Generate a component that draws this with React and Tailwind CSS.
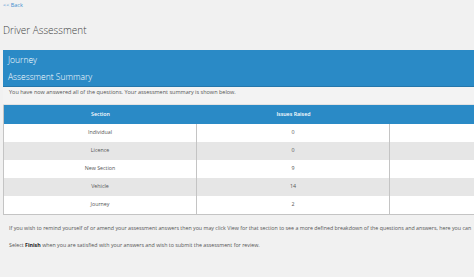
import React from "react";

const rows = [
  { section: "Individual", issues: 0 },
  { section: "Licence", issues: 0 },
  { section: "New Section", issues: 9 },
  { section: "Vehicle", issues: 14 },
  { section: "Journey", issues: 2 },
];

export default function App() {
  return (
    <div
      className="w-[474px] h-[277px] overflow-hidden bg-[#f1f1f1] text-[#555]"
      style={{ fontFamily: '"Open Sans", "Noto Sans", sans-serif' }}
    >
      <div className="pl-[3px] pt-[1px] h-[11px] text-[5.5px] leading-[9px] text-[#3c8fd0]">&lt;&lt; Back</div>

      <h1 className="pl-[3px] mt-[12px] h-[27px] text-[10px] leading-[14px] font-light text-[#444]">
        Driver Assessment
      </h1>

      <div className="ml-[3px] bg-[#2a8ac6] border-b border-[#2577ab] text-white font-light">
        <div className="pl-[5px] pt-[3px] h-[18px] text-[8.5px] leading-[14px]">Journey</div>
        <div className="pl-[5px] h-[18px] text-[8.5px] leading-[17px]">Assessment Summary</div>
      </div>

      <div className="ml-[3px] pl-[6px] h-[18px] text-[5.5px] leading-[10px] bg-[#f3f3f3] border-b border-[#e2e2e2] text-[#555]">
        You have now answered all of the questions. Your assessment summary is shown below.
      </div>

      <div className="ml-[3px] w-[520px] border-l border-b border-[#c4c4c4]">
        <div className="flex h-[19px] bg-[#2a8ac6] text-white text-[5.3px] font-semibold items-center">
          <div className="w-[193px] text-center">Section</div>
          <div className="w-[193px] text-center">Issues Raised</div>
          <div className="flex-1"></div>
        </div>
        {rows.map((r, i) => (
          <div
            key={r.section}
            className={`flex h-[18px] items-center text-[5.3px] text-[#555] ${i % 2 === 1 ? "bg-[#e6e6e6]" : "bg-white"}`}
          >
            <div className="w-[193px] h-full flex items-center justify-center border-r border-[#c4c4c4]">{r.section}</div>
            <div className="w-[193px] h-full flex items-center justify-center border-r border-[#c4c4c4]">{r.issues}</div>
            <div className="flex-1"></div>
          </div>
        ))}
      </div>

      <p className="pl-[9px] mt-[9px] whitespace-nowrap text-[5.3px] leading-[8px] text-[#555]">
        If you wish to remind yourself of or amend your assessment answers then you may click View for that section to see a more defined breakdown of the questions and answers, here you can
      </p>
      <p className="pl-[9px] mt-[9px] whitespace-nowrap text-[5.3px] leading-[8px] text-[#555]">
        Select <b className="font-bold text-[#222]">Finish</b> when you are satisfied with your answers and wish to submit the assessment for review.
      </p>
    </div>
  );
}
